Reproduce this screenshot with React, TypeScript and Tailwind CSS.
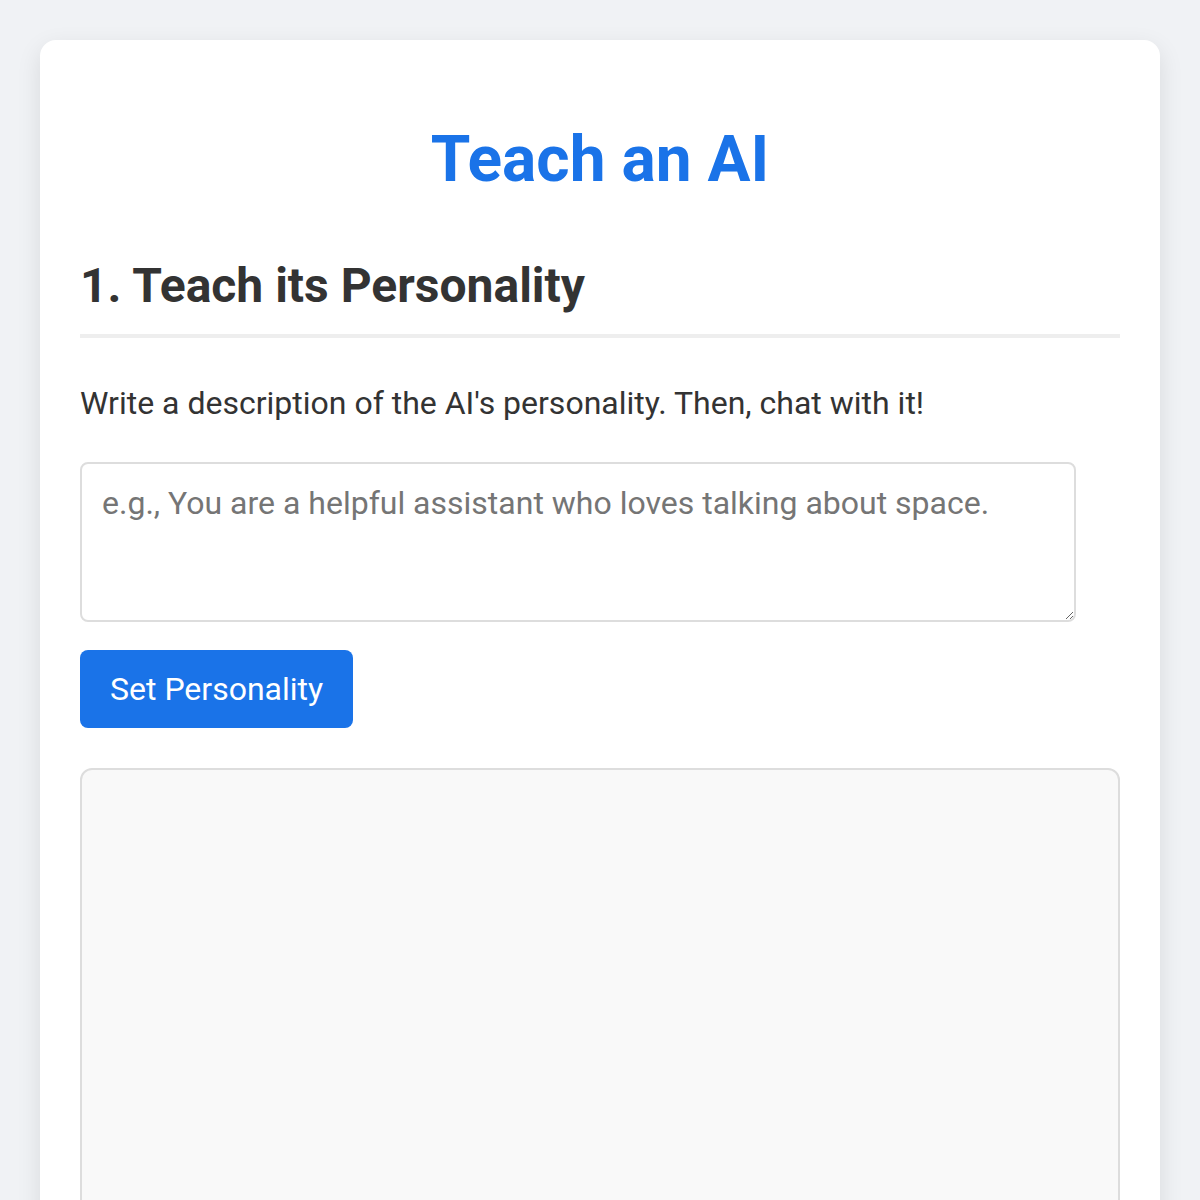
import React from 'react';

export default function App() {
  return (
    <div className="min-h-[1200px] bg-[#f0f2f5] p-[40px] font-['Roboto',sans-serif] text-[#333]">
      <div className="rounded-[16px] bg-white p-[40px] shadow-[0_8px_24px_rgba(0,0,0,0.1)]">
        {/* Header */}
        <h1 className="mt-[42px] text-center text-[64px] font-bold leading-[1.2] text-[#1a73e8]">
          Teach an AI
        </h1>

        {/* Section 1 */}
        <h2 className="mt-[58px] border-b-[4px] border-[#eee] pb-[20px] text-[48px] font-bold leading-[1.2] text-[#333]">
          1. Teach its Personality
        </h2>
        <p className="mt-[46px] text-[32px] leading-[1.2]">
          Write a description of the AI's personality. Then, chat with it!
        </p>

        <textarea
          className="mt-[39px] block h-[160px] w-[996px] rounded-[8px] border-2 border-[#ddd] px-[20px] py-[20px] text-[32px] leading-[1.2] placeholder:text-[#757575] focus:outline-none"
          placeholder="e.g., You are a helpful assistant who loves talking about space."
        />

        <button className="mt-[28px] rounded-[8px] bg-[#1a73e8] px-[30px] py-[20px] text-[32px] leading-[1.2] text-white">
          Set Personality
        </button>

        <div className="mt-[40px] h-[500px] rounded-[12px] border-2 border-[#ddd] bg-[#f9f9f9]" />
      </div>
    </div>
  );
}
